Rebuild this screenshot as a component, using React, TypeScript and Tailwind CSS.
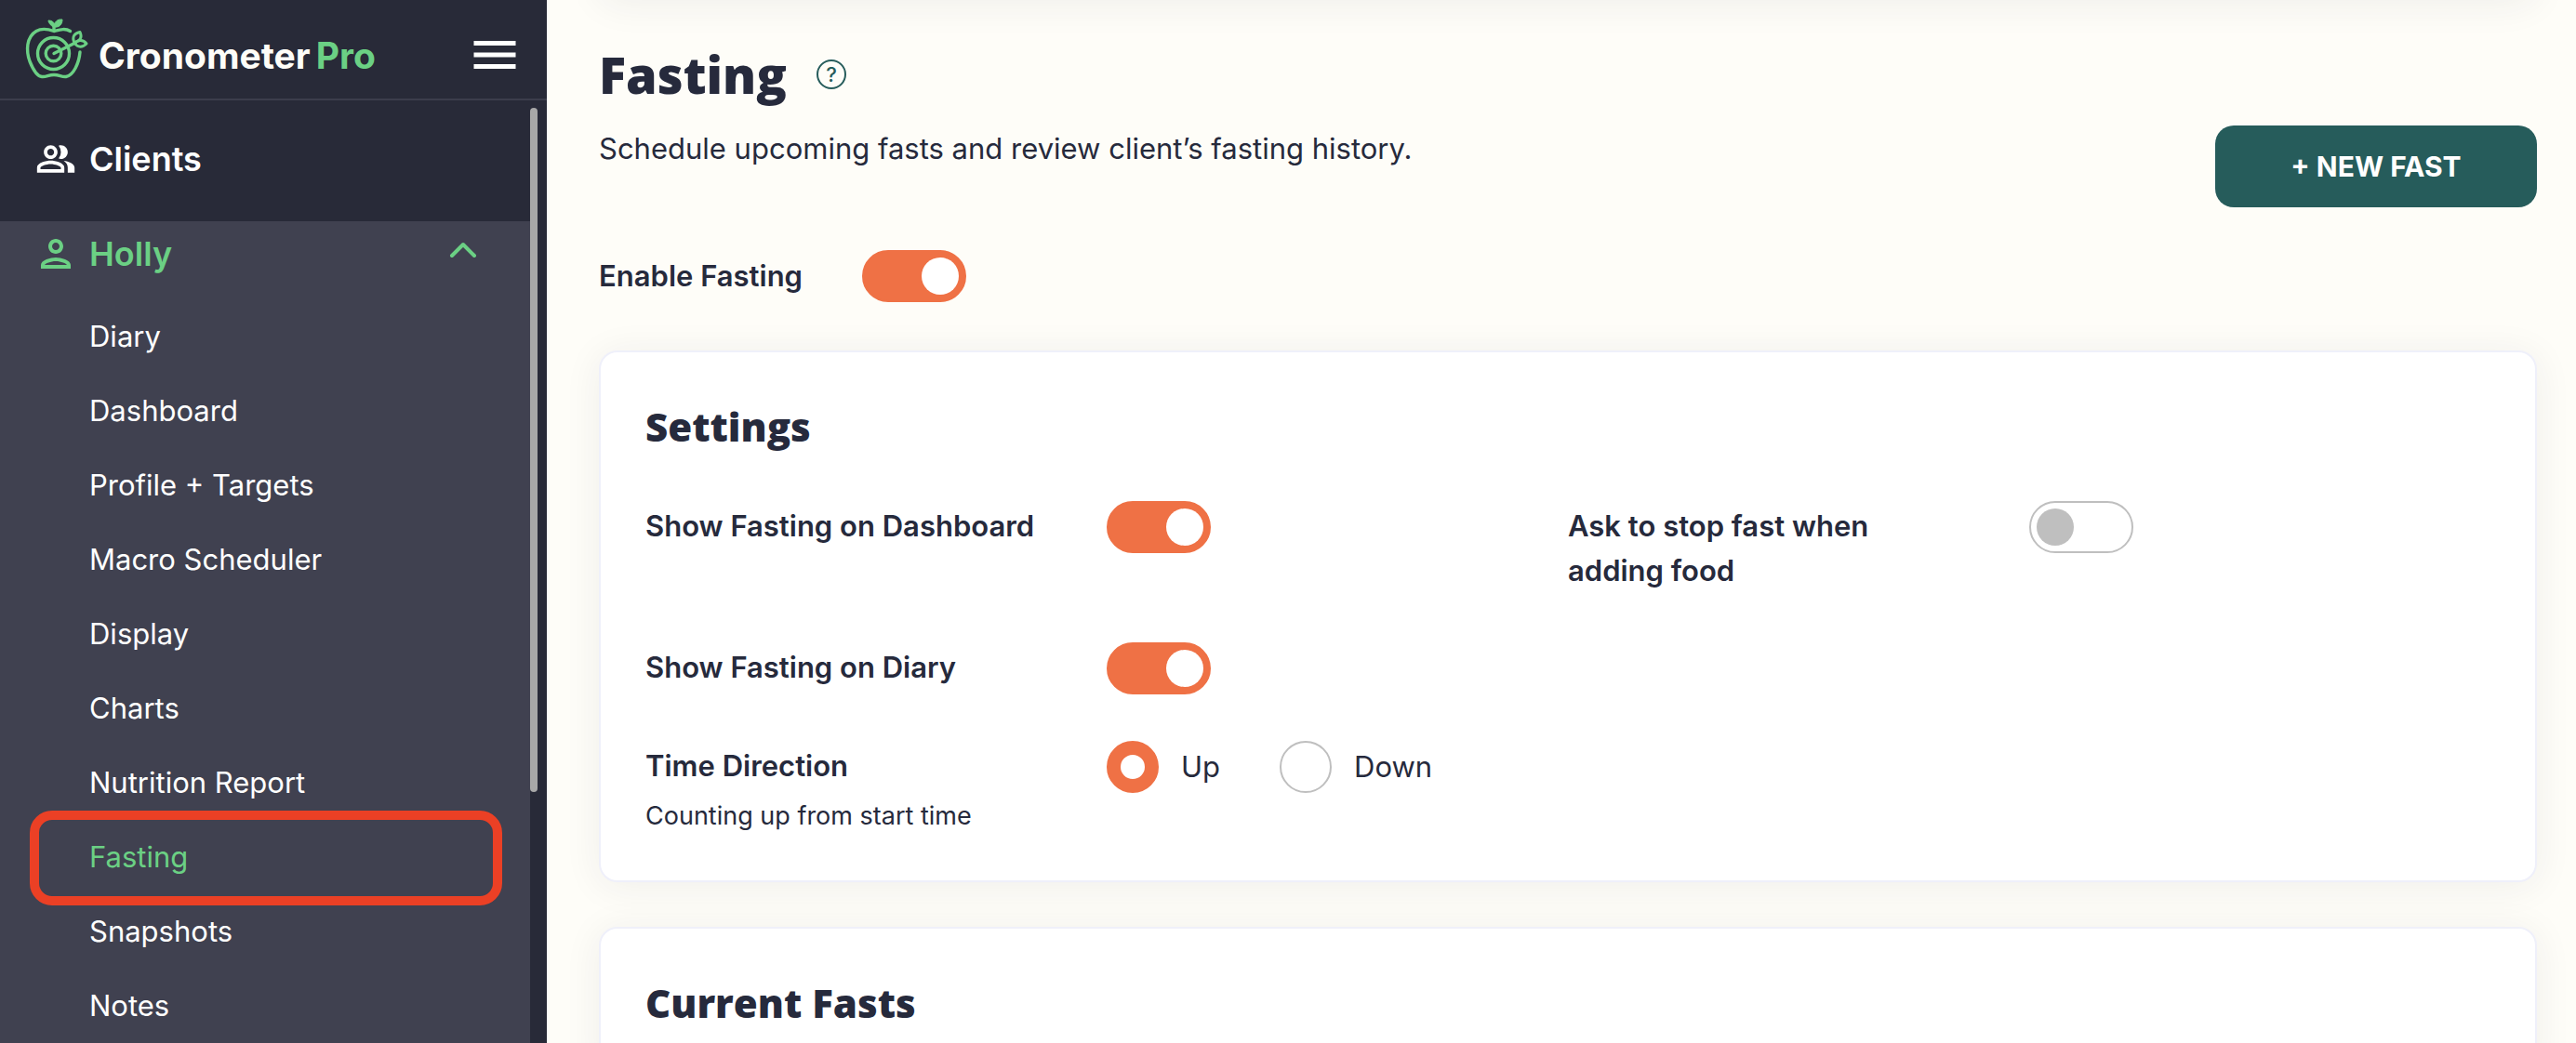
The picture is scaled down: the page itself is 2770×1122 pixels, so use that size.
import { useState } from "react";
import { MdMenu, MdOutlinePeopleAlt, MdOutlinePerson } from "react-icons/md";

const links = [
  "Diary",
  "Dashboard",
  "Profile + Targets",
  "Macro Scheduler",
  "Display",
  "Charts",
  "Nutrition Report",
  "Fasting",
  "Snapshots",
  "Notes",
];

const cardClass =
  "rounded-[20px] border-2 border-[#eff0fa] bg-white shadow-[0_4px_40px_rgba(40,42,56,0.07)]";
const headingFont = "font-['Open_Sans',sans-serif] font-extrabold";
const labelClass = "py-[3px] font-semibold";

function Logo() {
  return (
    <svg viewBox="0 0 80 80" className="size-20 shrink-0" fill="none" stroke="#6bd084" strokeWidth="3.4" strokeLinecap="round" strokeLinejoin="round" aria-hidden="true">
      <path d="M55.500 20.500C50 17 44 19 38 20.500C31 18 25 17 19 20.500C8 27 8 42 12 53C16 63 20 69 25 69.500C30 70 32 67.500 38 67.500C44 67.500 46 70 51 69.500C59 68 65 55 66 43" />
      <circle cx="37.500" cy="44.500" r="17" />
      <circle cx="37.500" cy="44.500" r="8.300" />
      <path d="M38 44.500L61 33" />
      <path d="M60 33C57 26 60 23 66 21.500C68 26 68 30 60 33Z" strokeWidth="3" />
      <path d="M60 33C64 39 69 38 73 34C70 30 66 29 60 33Z" strokeWidth="3" />
      <path d="M38 20V15" />
      <path d="M38 16C36 16 32 12 32 9C36 9 38 11 38.500 13C40 9 43 7.500 47 8C47 14 43 17 38 16Z" fill="#6bd084" strokeWidth="1" />
    </svg>
  );
}

function Switch({ id, defaultChecked = false }: { id: string; defaultChecked?: boolean }) {
  return (
    <input
      id={id}
      type="checkbox"
      role="switch"
      defaultChecked={defaultChecked}
      className="block h-14 w-28 shrink-0 cursor-pointer appearance-none rounded-full border-2 border-[#bfbfbf] bg-white p-1.5 before:block before:size-10 before:rounded-full before:bg-[#bfbfbf] checked:border-[#ef7145] checked:bg-[#ef7145] checked:before:ml-auto checked:before:bg-white"
    />
  );
}

function Radio({ label, checked, onChange }: { label: string; checked: boolean; onChange: () => void }) {
  return (
    <label className="flex cursor-pointer items-center gap-6">
      <input
        type="radio"
        name="direction"
        checked={checked}
        onChange={onChange}
        className="size-14 shrink-0 appearance-none rounded-full border-2 border-[#bfbfbf] bg-white checked:border-[15px] checked:border-[#ef7145]"
      />
      {label}
    </label>
  );
}

function Sidebar() {
  return (
    <aside className="flex w-[588px] shrink-0 flex-col overflow-hidden bg-[#282a38] text-white">
      <header className="flex h-[108px] shrink-0 items-center justify-between border-b-2 border-[#3c3d4c] pr-[26px] pl-5">
        <a href="#home" className="flex items-center gap-1.5 text-[39px] leading-none font-bold">
          <Logo />
          <span className="flex gap-1.5 pt-3">
            <span className="text-[#fefdf8]">Cronometer</span>
            <span className="text-[#6bd084]">Pro</span>
          </span>
        </a>
        <button type="button" aria-label="Menu" className="pt-3">
          <MdMenu size={60} />
        </button>
      </header>
      <div className="flex min-h-0 grow">
        <nav className="w-[570px] shrink-0">
          <a href="#clients" className="flex h-[130px] items-center gap-3.5 pb-1 pl-[38px] text-4xl font-semibold">
            <MdOutlinePeopleAlt size={44} />
            Clients
          </a>
          <div className="min-h-full bg-[#404150]">
            <button type="button" className="flex h-[70px] w-full items-center gap-3.5 pr-14 pl-[38px] text-4xl font-semibold text-[#6bd084]">
              <MdOutlinePerson size={48} className="-mx-0.5" />
              Holly
              <svg viewBox="0 0 32 20" className="mb-2 ml-auto h-5 w-8" fill="none" stroke="currentColor" strokeWidth="4" strokeLinecap="round" strokeLinejoin="round" aria-hidden="true">
                <path d="M4 16L16 4L28 16" />
              </svg>
            </button>
            <ul className="pt-3.5">
              {links.map((l) => (
                <li key={l} className="relative">
                  <a href="#page" className={l === "Fasting" ? "flex h-20 items-center pl-24 text-[#6bd084]" : "flex h-20 items-center pl-24"}>
                    {l}
                  </a>
                  {l === "Fasting" && (
                    <span className="pointer-events-none absolute -top-2.5 right-[30px] -bottom-3 left-8 rounded-3xl border-[10px] border-[#eb4025]" />
                  )}
                </li>
              ))}
            </ul>
          </div>
        </nav>
        <div className="mt-2 h-[736px] w-2 rounded-full bg-[#a8a8a8]" />
      </div>
    </aside>
  );
}

export default function App() {
  const [up, setUp] = useState(true);
  return (
    <div className="flex h-screen overflow-hidden bg-[#fefdf8] font-[Inter,sans-serif] text-[31px] leading-[48px] text-[#262a3c]">
      <Sidebar />
      <main className="min-w-0 grow overflow-hidden pr-[42px] pl-14">
        <div className={`${cardClass} -mt-12 h-12`} />
        <div className="flex items-start justify-between">
          <div className="pt-11">
            <div className="flex items-center gap-8">
              <h1 className={`${headingFont} text-[54px] leading-[72px]`}>Fasting</h1>
              <button type="button" aria-label="Help" className="size-8 rounded-full border-2 border-[#265c5b] text-[22px] leading-7 font-medium text-[#265c5b]">
                ?
              </button>
            </div>
            <p className="pt-5">Schedule upcoming fasts and review client’s fasting history.</p>
          </div>
          <button type="button" className="mt-[135px] h-[88px] w-[346px] rounded-[20px] bg-[#265c5b] text-[30px] font-bold text-white">
            + NEW FAST
          </button>
        </div>
        <div className="flex items-center gap-16 pt-[46px] pb-[52px]">
          <label htmlFor="enable" className={labelClass}>Enable Fasting</label>
          <Switch id="enable" defaultChecked />
        </div>
        <section className={`${cardClass} px-12 pt-[50px] pb-12`}>
          <h2 className={`${headingFont} text-[42px] leading-[60px]`}>Settings</h2>
          <div className="mt-[50px] grid grid-cols-4 gap-y-[50px]">
            <label htmlFor="dash" className={labelClass}>Show Fasting on Dashboard</label>
            <Switch id="dash" defaultChecked />
            <label htmlFor="ask" className={`${labelClass} max-w-[380px]`}>Ask to stop fast when adding food</label>
            <Switch id="ask" />
            <label htmlFor="diary" className={labelClass}>Show Fasting on Diary</label>
            <Switch id="diary" defaultChecked />
            <div className="col-start-1 row-start-3">
              <div className={labelClass}>Time Direction</div>
              <p className="pt-1.5 text-[27px] leading-[42px]">Counting up from start time</p>
            </div>
            <div className="row-start-3 flex items-start gap-16">
              <Radio label="Up" checked={up} onChange={() => setUp(true)} />
              <Radio label="Down" checked={!up} onChange={() => setUp(false)} />
            </div>
          </div>
        </section>
        <section className={`${cardClass} mt-12 px-12 pt-[50px] pb-12`}>
          <h2 className={`${headingFont} text-[42px] leading-[60px]`}>Current Fasts</h2>
        </section>
      </main>
    </div>
  );
}
